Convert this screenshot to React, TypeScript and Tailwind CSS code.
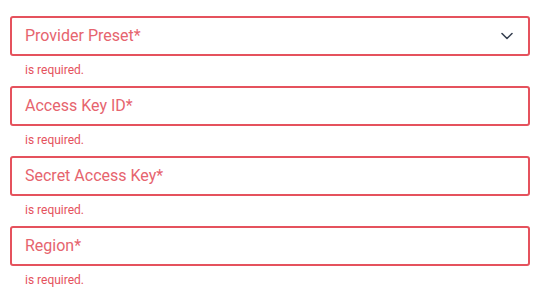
import { ChevronDown } from 'lucide-react';

const fields = [
  { label: 'Provider Preset*', select: true },
  { label: 'Access Key ID*' },
  { label: 'Secret Access Key*' },
  { label: 'Region*' },
];

export default function App() {
  return (
    <div className="w-[538px] h-[291px] bg-white pl-[10px] pr-2 pt-4 font-['Roboto',sans-serif]">
      {fields.map((f) => (
        <div key={f.label} className="h-[70px]">
          <div className="h-10 flex items-center justify-between border-2 border-[#e5525d] rounded-[3px] pl-[13px] pr-[11px]">
            <span className="text-[16px] text-[#e6646e]">{f.label}</span>
            {f.select && <ChevronDown size={20} strokeWidth={1.9} className="text-[#374151]" />}
          </div>
          <div className="pl-[15px] pt-[6px] text-[12px] leading-4 text-[#e5525d]">is required.</div>
        </div>
      ))}
    </div>
  );
}
